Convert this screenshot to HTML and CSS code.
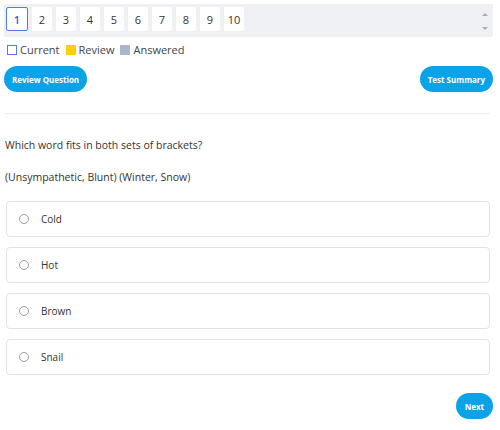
FILE: index.html
```html
<!DOCTYPE html>
<html lang="en">
<head>
    <meta charset="UTF-8">
    <title>Test</title>
    <link rel="stylesheet" href="styles.css">
</head>
<body>
    <div class="page">
        <div class="pager">
            <div class="pages">
                <span class="page-num current">1</span>
                <span class="page-num">2</span>
                <span class="page-num">3</span>
                <span class="page-num">4</span>
                <span class="page-num">5</span>
                <span class="page-num">6</span>
                <span class="page-num">7</span>
                <span class="page-num">8</span>
                <span class="page-num">9</span>
                <span class="page-num">10</span>
            </div>
            <div class="scroll-arrows">
                <span class="arrow up"></span>
                <span class="arrow down"></span>
            </div>
        </div>

        <div class="legend">
            <span class="swatch swatch-current"></span> Current
            <span class="swatch swatch-review"></span> Review
            <span class="swatch swatch-answered"></span> Answered
        </div>

        <div class="actions">
            <button class="pill">Review Question</button>
            <button class="pill">Test Summary</button>
        </div>

        <hr class="divider">

        <p class="question">Which word fits in both sets of brackets?</p>
        <p class="question">(Unsympathetic, Blunt) (Winter, Snow)</p>

        <div class="options">
            <label class="option"><span class="radio"></span>Cold</label>
            <label class="option"><span class="radio"></span>Hot</label>
            <label class="option"><span class="radio"></span>Brown</label>
            <label class="option"><span class="radio"></span>Snail</label>
        </div>

        <div class="footer">
            <button class="pill">Next</button>
        </div>
    </div>
</body>
</html>
```

FILE: styles.css
```css
body {
    margin: 0;
    background-color: #fff;
    color: #333;
    font-family: "Open Sans", sans-serif;
}
.page {
    padding: 4px 7px 0 4px;
}
/* pasek z numerami pytan */
.pager {
    background-color: #eef0f3;
    height: 33px;
    display: flex;
    justify-content: space-between;
}
.pages {
    display: flex;
    gap: 4px;
    padding: 3px 2px;
}
.page-num {
    width: 20px;
    height: 24px;
    background-color: #fff;
    display: flex;
    align-items: center;
    justify-content: center;
    font-size: 11px;
    color: #333;
    box-sizing: border-box;
    border-radius: 2px;
}
.page-num.current {
    width: 22px;
    border: 1px solid #4d7cf2;
    color: #3b5fc9;
    font-weight: 600;
}
.scroll-arrows {
    display: flex;
    flex-direction: column;
    justify-content: space-between;
    padding: 9px 5px 7px 0;
}
.arrow {
    width: 0;
    height: 0;
    border-left: 3px solid transparent;
    border-right: 3px solid transparent;
}
.arrow.up {
    border-bottom: 3px solid #a8adb5;
}
.arrow.down {
    border-top: 3px solid #a8adb5;
}
.legend {
    display: flex;
    align-items: center;
    gap: 3px;
    font-size: 11px;
    color: #444;
    margin: 6px 0 0 3px;
    height: 13px;
}
.swatch {
    width: 10px;
    height: 10px;
    box-sizing: border-box;
    display: inline-block;
}
.swatch-current {
    border: 1px solid #4d7cf2;
}
.swatch-review {
    background-color: #ffd000;
    margin-left: 3px;
}
.swatch-answered {
    background-color: #a9b7c8;
    margin-left: 3px;
}
.actions {
    display: flex;
    justify-content: space-between;
    margin-top: 10px;
}
.pill {
    background-color: #0aa3e8;
    color: white;
    border: none;
    border-radius: 14px;
    height: 26px;
    padding: 0 8px;
    font-family: "Open Sans", sans-serif;
    font-size: 8px;
    font-weight: bold;
    cursor: pointer;
}
.divider {
    border: none;
    border-top: 1px solid #eceef1;
    margin: 21px 3px 0 0;
}
.question {
    font-size: 10.5px;
    margin: 0 0 0 1px;
    line-height: 14px;
}
.question:first-of-type {
    margin-top: 24px;
}
.question + .question {
    margin-top: 18px;
}
.options {
    display: flex;
    flex-direction: column;
    gap: 10px;
    margin: 17px 3px 0 2px;
}
.option {
    height: 36px;
    border: 1px solid #dfe2ea;
    border-radius: 4px;
    display: flex;
    align-items: center;
    font-size: 10px;
    color: #333;
    box-sizing: border-box;
    padding-left: 12px;
}
.radio {
    width: 8px;
    height: 8px;
    border: 1px solid #999;
    border-radius: 50%;
    margin-right: 12px;
}
.footer {
    display: flex;
    justify-content: flex-end;
    margin-top: 18px;
}
.footer .pill {
    padding: 0 9px;
}
```
